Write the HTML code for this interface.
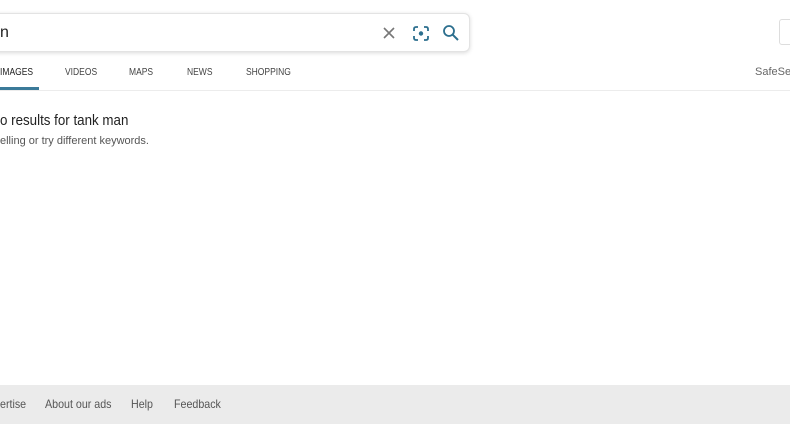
<!DOCTYPE html>
<html><head><meta charset="utf-8"><style>
*{margin:0;padding:0;box-sizing:border-box}
body{width:790px;height:430px;background:#fff;font-family:"Liberation Sans",Arial,sans-serif;position:relative;overflow:hidden}
.sb{position:absolute;left:-20px;top:13px;width:490px;height:39px;border:1px solid #e3e3e3;border-radius:6px;box-shadow:0 1px 4px rgba(0,0,0,.15);background:#fff}
.q{position:absolute;left:0;top:24px;font-size:16px;color:#222}
.rbox{position:absolute;left:779px;top:19px;width:30px;height:26px;border:1px solid #ddd;border-radius:3px}
.tab{position:absolute;top:67px;font-size:10px;color:#444;transform:scaleX(.85);transform-origin:0 0;white-space:nowrap}
.line{position:absolute;left:0;top:90px;width:790px;height:1px;background:#ececec}
.ul{position:absolute;left:0;top:87px;width:39px;height:3px;background:#3b7a99}
.h{position:absolute;left:0;top:112px;font-size:15px;color:#222;transform:scaleX(.89);transform-origin:0 0;white-space:nowrap}
.s{position:absolute;left:0;top:135px;font-size:11px;color:#555;white-space:nowrap}
.foot{position:absolute;left:0;top:385px;width:790px;height:39px;background:#ebebeb;font-size:12px;color:#555}
.foot span{position:absolute;top:12px;transform:scaleX(.89);transform-origin:0 0;white-space:nowrap}
</style></head><body>
<div class="sb"></div>
<div class="q">n</div>
<svg style="position:absolute;left:382px;top:26px" width="14" height="14" viewBox="0 0 14 14"><path d="M2 2L12 12M12 2L2 12" stroke="#777" stroke-width="1.6"/></svg>
<svg style="position:absolute;left:412px;top:25px" width="18" height="17" viewBox="0 0 18 17"><path d="M2 6V4Q2 2 4 2H6M12 2H14Q16 2 16 4V6M16 11V13Q16 15 14 15H12M6 15H4Q2 15 2 13V11" fill="none" stroke="#2c6f8e" stroke-width="1.8"/><circle cx="9" cy="8.5" r="2.2" fill="#2c6f8e"/></svg>
<svg style="position:absolute;left:442px;top:24px" width="18" height="18" viewBox="0 0 18 18"><circle cx="7" cy="7" r="5" fill="none" stroke="#2c6f8e" stroke-width="1.8"/><path d="M10.8 10.8L16 16" stroke="#2c6f8e" stroke-width="2"/></svg>
<div class="rbox"></div>
<div class="tab" style="left:0;color:#222">IMAGES</div>
<div class="tab" style="left:65px">VIDEOS</div>
<div class="tab" style="left:129px">MAPS</div>
<div class="tab" style="left:187px">NEWS</div>
<div class="tab" style="left:246px">SHOPPING</div>
<div class="tab" style="left:755px;font-size:11px;color:#666;top:66px;transform:none">SafeSe</div>
<div class="line"></div><div class="ul"></div>
<div class="h">o results for tank man</div>
<div class="s">elling or try different keywords.</div>
<div class="foot"><span style="left:0">ertise</span><span style="left:45px">About our ads</span><span style="left:131px">Help</span><span style="left:174px">Feedback</span></div>
</body></html>
